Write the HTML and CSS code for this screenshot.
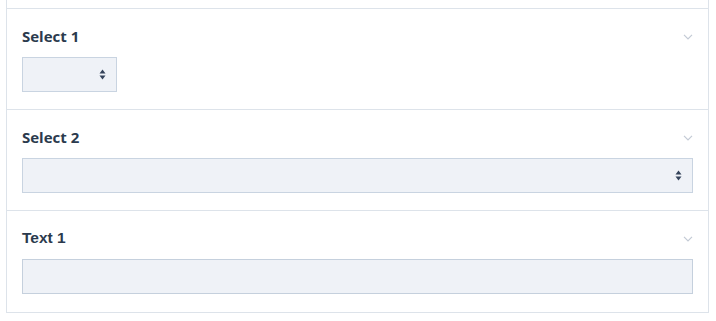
FILE: index.html
```html
<!DOCTYPE html>
<html>
<head>
<meta charset="utf-8">
<link rel="stylesheet" href="styles.css">
</head>
<body>
<div class="panel">
  <div class="stub"></div>
  <section class="field">
    <div class="head">
      <label class="label label-sans">Select 1</label>
      <svg class="chev" width="10" height="6" viewBox="0 0 10 6"><path d="M1 0.8 L5 4.8 L9 0.8" fill="none" stroke="#c3cad5" stroke-width="1.2"/></svg>
    </div>
    <div class="select select-short">
      <svg class="sort" width="7" height="11" viewBox="0 0 7 11"><path d="M3.5 0.5 L6.5 4.5 L0.5 4.5 Z" fill="#34435a"/><path d="M3.5 10.5 L6.5 6.5 L0.5 6.5 Z" fill="#34435a"/></svg>
    </div>
  </section>
  <section class="field">
    <div class="head">
      <label class="label label-sans">Select 2</label>
      <svg class="chev" width="10" height="6" viewBox="0 0 10 6"><path d="M1 0.8 L5 4.8 L9 0.8" fill="none" stroke="#c3cad5" stroke-width="1.2"/></svg>
    </div>
    <div class="select">
      <svg class="sort" width="7" height="11" viewBox="0 0 7 11"><path d="M3.5 0.5 L6.5 4.5 L0.5 4.5 Z" fill="#34435a"/><path d="M3.5 10.5 L6.5 6.5 L0.5 6.5 Z" fill="#34435a"/></svg>
    </div>
  </section>
  <section class="field field-last">
    <div class="head">
      <label class="label label-arial">Text 1</label>
      <svg class="chev" width="10" height="6" viewBox="0 0 10 6"><path d="M1 0.8 L5 4.8 L9 0.8" fill="none" stroke="#c3cad5" stroke-width="1.2"/></svg>
    </div>
    <input class="text" type="text">
  </section>
</div>
</body>
</html>
```
FILE: styles.css
```css
html, body {
  margin: 0;
  padding: 0;
  background: #ffffff;
}
.panel {
  margin-left: 6px;
  width: 701px;
  border-left: 1px solid #dde3ea;
  border-right: 1px solid #dde3ea;
  border-bottom: 1px solid #dde3ea;
}
.stub {
  height: 8px;
  border-bottom: 1px solid #dde3ea;
}
.field {
  padding: 17px 15px 17px 15px;
  border-bottom: 1px solid #dde3ea;
  display: flex;
  flex-direction: column;
  gap: 11px;
}
.field-last {
  border-bottom: none;
  padding-bottom: 18px;
}
.head {
  height: 20px;
  display: flex;
  justify-content: space-between;
  align-items: flex-start;
}
.label {
  font-size: 15px;
  line-height: 20px;
  font-weight: 700;
  color: #2b3a4d;
}
.label-sans {
  font-family: "Open Sans", sans-serif;
}
.label-arial {
  font-family: "Liberation Sans", Arial, sans-serif;
  font-size: 15.5px;
}
.chev {
  margin-top: 8px;
}
.select {
  position: relative;
  box-sizing: border-box;
  height: 35px;
  background: #eff2f7;
  border: 1px solid #c9d4e1;
}
.select-short {
  width: 95px;
}
.sort {
  position: absolute;
  right: 10px;
  top: 11px;
}
.text {
  box-sizing: border-box;
  height: 35px;
  width: 100%;
  margin: 0;
  padding: 0 8px;
  background: #eff2f7;
  border: 1px solid #c5d0dd;
  outline: none;
  font-family: "Liberation Sans", Arial, sans-serif;
}
```
